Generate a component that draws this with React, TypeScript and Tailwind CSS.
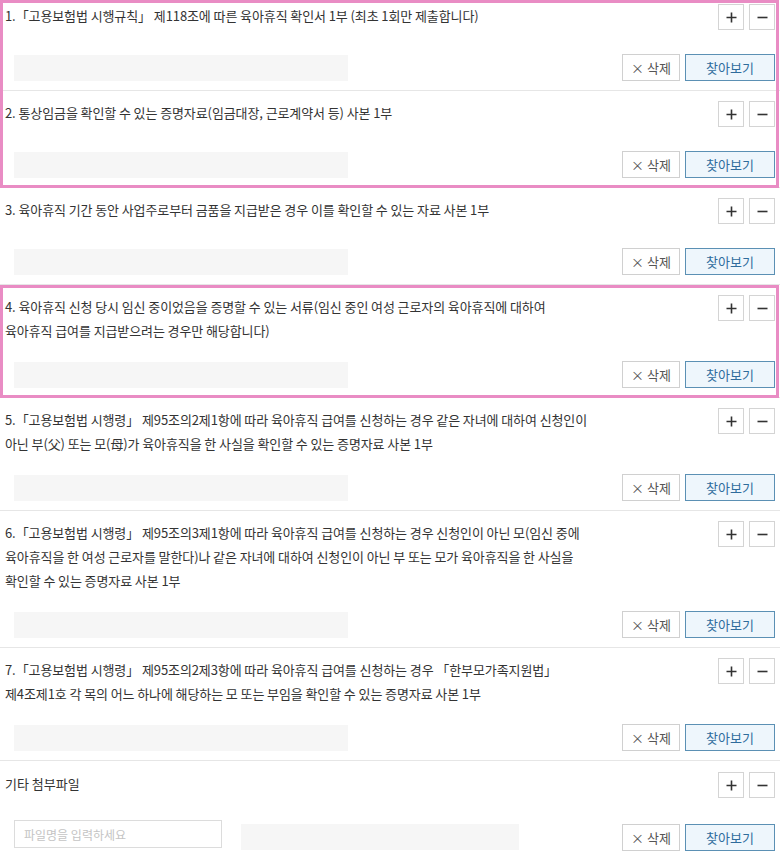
import { Fragment } from "react"

const FONT = "font-['Noto_Sans_CJK_KR','Noto_Sans',sans-serif]"

type Doc = { lines: string[] }

// rows are grouped so a pink annotation frame can wrap a whole group
const groups: Doc[][] = [
  [
    {
      lines: [
        "1.「고용보험법 시행규칙」 제118조에 따른 육아휴직 확인서 1부 (최초 1회만 제출합니다)",
      ],
    },
    {
      lines: ["2. 통상임금을 확인할 수 있는 증명자료(임금대장, 근로계약서 등) 사본 1부"],
    },
  ],
  [
    {
      lines: [
        "3. 육아휴직 기간 동안 사업주로부터 금품을 지급받은 경우 이를 확인할 수 있는 자료 사본 1부",
      ],
    },
  ],
  [
    {
      lines: [
        "4. 육아휴직 신청 당시 임신 중이었음을 증명할 수 있는 서류(임신 중인 여성 근로자의 육아휴직에 대하여",
        "육아휴직 급여를 지급받으려는 경우만 해당합니다)",
      ],
    },
  ],
  [
    {
      lines: [
        "5.「고용보험법 시행령」 제95조의2제1항에 따라 육아휴직 급여를 신청하는 경우 같은 자녀에 대하여 신청인이",
        "아닌 부(父) 또는 모(母)가 육아휴직을 한 사실을 확인할 수 있는 증명자료 사본 1부",
      ],
    },
    {
      lines: [
        "6.「고용보험법 시행령」 제95조의3제1항에 따라 육아휴직 급여를 신청하는 경우 신청인이 아닌 모(임신 중에",
        "육아휴직을 한 여성 근로자를 말한다)나 같은 자녀에 대하여 신청인이 아닌 부 또는 모가 육아휴직을 한 사실을",
        "확인할 수 있는 증명자료 사본 1부",
      ],
    },
    {
      lines: [
        "7.「고용보험법 시행령」 제95조의2제3항에 따라 육아휴직 급여를 신청하는 경우 「한부모가족지원법」",
        "제4조제1호 각 목의 어느 하나에 해당하는 모 또는 부임을 확인할 수 있는 증명자료 사본 1부",
      ],
    },
  ],
]

const highlighted = [true, false, true, false]

function PlusMinus() {
  return (
    <div className="mb-[7px] flex shrink-0 gap-[5px]">
      <button
        type="button"
        aria-label="추가"
        className="flex h-[26px] w-[26px] items-center justify-center border border-[#d4d4d4] bg-white"
      >
        <svg width="11" height="11" viewBox="0 0 11 11">
          <path d="M5.5 0.5v10M0.5 5.5h10" stroke="#333" strokeWidth="1.6" />
        </svg>
      </button>
      <button
        type="button"
        aria-label="삭제"
        className="flex h-[26px] w-[26px] items-center justify-center border border-[#d4d4d4] bg-white"
      >
        <svg width="11" height="11" viewBox="0 0 11 11">
          <path d="M0.5 5.5h10" stroke="#333" strokeWidth="1.6" />
        </svg>
      </button>
    </div>
  )
}

function FileButtons() {
  return (
    <div className="flex shrink-0 gap-[5px]">
      <button
        type="button"
        className="flex h-[27px] w-[58px] items-center justify-center gap-[3px] border border-[#d0d0d0] bg-white text-[13px] text-[#555]"
      >
        <span className="text-[13px]">×</span>
        삭제
      </button>
      <button
        type="button"
        className="flex h-[27px] w-[90px] items-center justify-center border border-[#5b90b4] bg-[#eef6fc] text-[13px] text-[#2f6c9c]"
      >
        찾아보기
      </button>
    </div>
  )
}

function DocRow({ doc, first }: { doc: Doc; first: boolean }) {
  return (
    <div
      className={
        first
          ? "border-b border-[#e6e6e6] px-[5px] pb-[9px] pt-[4px]"
          : "border-b border-[#e6e6e6] px-[5px] pb-[9px] pt-[10px]"
      }
    >
      <div className="flex items-start justify-between">
        <p className="whitespace-nowrap text-[13px] leading-[24px] tracking-[-0.1px] text-[#333]">
          {doc.lines.map((line, i) => (
            <Fragment key={i}>
              {i > 0 && <br />}
              {line}
            </Fragment>
          ))}
        </p>
        <PlusMinus />
      </div>
      <div
        className={
          doc.lines.length > 1
            ? "mt-[18px] flex items-center justify-between pl-[9px]"
            : "mt-[17px] flex items-center justify-between pl-[9px]"
        }
      >
        <div className="h-[26px] w-[334px] bg-[#f6f6f6]" />
        <FileButtons />
      </div>
    </div>
  )
}

export default function App() {
  return (
    <div className={`w-[780px] bg-white ${FONT}`}>
      {groups.map((group, g) => (
        <div key={g} className="relative">
          {group.map((doc) => (
            <DocRow key={doc.lines[0]} doc={doc} first={g === 0 && doc === group[0]} />
          ))}
          {highlighted[g] && (
            <div className="pointer-events-none absolute inset-0 right-[1px] border-[3px] border-[#e98cc4]" />
          )}
        </div>
      ))}

      {/* extra attachments */}
      <div className="px-[5px] pb-[6px] pt-[11px]">
        <div className="flex items-start justify-between">
          <p className="text-[13px] leading-[24px] text-[#333]">기타 첨부파일</p>
          <PlusMinus />
        </div>
        <div className="mt-[15px] flex items-start justify-between pl-[9px]">
          <div className="flex items-start">
            <input
              type="text"
              placeholder="파일명을 입력하세요"
              className="h-[28px] w-[208px] border border-[#dcdcdc] px-[9px] text-[12px] text-[#333] outline-none placeholder:text-[#c4c4c4]"
            />
            <div className="ml-[19px] mt-[4px] h-[26px] w-[278px] bg-[#f6f6f6]" />
          </div>
          <div className="mt-[4px]">
            <FileButtons />
          </div>
        </div>
      </div>
    </div>
  )
}
